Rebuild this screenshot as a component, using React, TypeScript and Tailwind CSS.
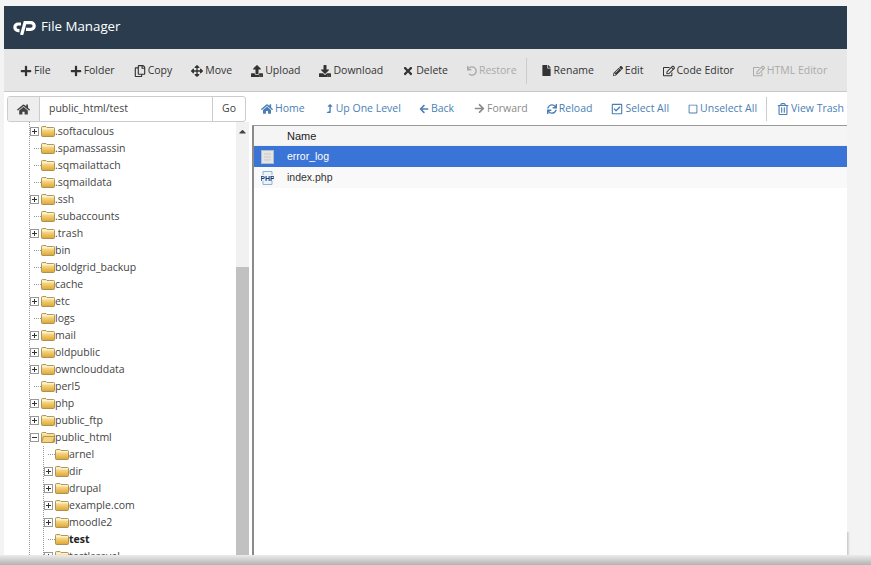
import React from "react";
import {
  FaPlus, FaRegCopy, FaArrowsAlt, FaUpload, FaDownload, FaTimes, FaUndo, FaFile, FaPencilAlt, FaRegEdit,
  FaHome, FaLevelUpAlt, FaArrowLeft, FaArrowRight, FaSync, FaRegCheckSquare, FaRegSquare, FaRegTrashAlt, FaCaretUp,
} from "react-icons/fa";

const Folder = ({ open }: { open?: boolean }) => (
  <svg width="14" height="11" viewBox="0 0 14 11" className="shrink-0">
    <defs>
      <linearGradient id="fg" x1="0" y1="0" x2="0" y2="1">
        <stop offset="0" stopColor="#fff2b8" />
        <stop offset="1" stopColor="#e0a52c" />
      </linearGradient>
    </defs>
    <path d="M.5 1.5Q.5 .5 1.5 .5H5l1 1h6.5q1 0 1 1V9.5q0 1-1 1h-11q-1 0-1-1z" fill="url(#fg)" stroke="#96814c" strokeWidth=".8" />
    {open ? <path d="M2.5 4.5H13.8L11.5 10.5H.6z" fill="#f6d27a" stroke="#96814c" strokeWidth=".7" /> : <path d="M1 2.8H13" stroke="#fff8dc" strokeWidth="1" />}
  </svg>
);

const Exp = ({ open }: { open?: boolean }) => (
  <svg width="9" height="9" viewBox="0 0 9 9" className="shrink-0 bg-white">
    <rect x=".5" y=".5" width="8" height="8" fill="#fff" stroke="#999" />
    <path d={open ? "M2 4.5H7" : "M2 4.5H7M4.5 2V7"} stroke="#333" />
  </svg>
);

type Node = { n: string; e?: boolean; o?: boolean; b?: boolean };

const Row = ({ node }: { node: Node }) => (
  <div className="h-[17px] flex items-center text-[10.5px] text-[#444]">
    <div className="w-[11px] h-[17px] flex items-center shrink-0 -ml-[4px]">
      {node.e || node.o ? <Exp open={node.o} /> : <span className="ml-[4px] w-[7px] border-t border-dotted border-[#999]" />}
    </div>
    <div className="w-[14px] shrink-0"><Folder open={node.o} /></div>
    <span className={node.b ? "font-bold text-[#222]" : ""}>{node.n}</span>
  </div>
);

const top: Node[] = [
  { n: ".softaculous", e: true }, { n: ".spamassassin" }, { n: ".sqmailattach" }, { n: ".sqmaildata" },
  { n: ".ssh", e: true }, { n: ".subaccounts" }, { n: ".trash", e: true }, { n: "bin" }, { n: "boldgrid_backup" },
  { n: "cache" }, { n: "etc", e: true }, { n: "logs" }, { n: "mail", e: true }, { n: "oldpublic", e: true },
  { n: "ownclouddata", e: true }, { n: "perl5" }, { n: "php", e: true },
  { n: "public_ftp", e: true }, { n: "public_html", o: true },
];
const sub: Node[] = [
  { n: "arnel" }, { n: "dir", e: true }, { n: "drupal", e: true }, { n: "example.com", e: true },
  { n: "moodle2", e: true }, { n: "test", b: true }, { n: "testlaravel", e: true },
];

const Tool = ({ icon, label, muted }: { icon: React.ReactNode; label: string; muted?: boolean }) => (
  <div className={`flex items-center gap-[2px] whitespace-nowrap ${muted ? "text-[#aaa]" : "text-[#333]"}`}>
    {icon}
    <span>{label}</span>
  </div>
);
const Nav = ({ icon, label, muted }: { icon: React.ReactNode; label: string; muted?: boolean }) => (
  <div className={`flex items-center gap-[2px] whitespace-nowrap ${muted ? "text-[#8a8a8a]" : "text-[#4a7fb5]"}`}>
    {icon}
    <span>{label}</span>
  </div>
);

const Logo = () => (
  <svg width="23" height="15" viewBox="0 0 23 15" className="shrink-0">
    <path d="M8 4H5.2A3.3 3.3 0 0 0 5.2 10.6H6.5" fill="none" stroke="#fff" strokeWidth="3.2" />
    <path d="M8.6 15L12 2.6H17.8A3.4 3.4 0 0 1 17.8 9.4H13" fill="none" stroke="#fff" strokeWidth="3.2" />
  </svg>
);

export default function App() {
  return (
    <div className="w-[871px] h-[565px] bg-[#f3f3f3] flex flex-col overflow-hidden pt-[6px]" style={{ fontFamily: "'Open Sans', sans-serif" }}>
      <div className="flex-1 min-h-0 flex">
        <div className="ml-[4px] w-[843px] bg-white flex flex-col min-h-0">
          <div className="h-[43px] shrink-0 bg-[#2a3c4d] flex items-center pl-[9px] gap-[5px] text-white text-[13.3px] pb-[1px]">
            <Logo />
            <span>File Manager</span>
          </div>
          <div className="h-[43px] shrink-0 bg-[#e6e6e6] border-b border-[#c8c8c8] flex items-center pl-[16px] pt-[1px] gap-[19px] text-[10.5px]">
            <Tool icon={<FaPlus className="text-[12px]" />} label="File" />
            <Tool icon={<FaPlus className="text-[12px]" />} label="Folder" />
            <Tool icon={<FaRegCopy className="text-[12px]" />} label="Copy" />
            <Tool icon={<FaArrowsAlt className="text-[12px]" />} label="Move" />
            <Tool icon={<FaUpload className="text-[12px]" />} label="Upload" />
            <Tool icon={<FaDownload className="text-[12px]" />} label="Download" />
            <Tool icon={<FaTimes className="text-[12px]" />} label="Delete" />
            <div className="flex items-center">
              <Tool icon={<FaUndo className="text-[10px]" />} label="Restore" muted />
              <div className="ml-[9px] h-[26px] border-l border-[#ccc]" />
            </div>
            <div className="-ml-[5px]"><Tool icon={<FaFile className="text-[11px]" />} label="Rename" /></div>
            <Tool icon={<FaPencilAlt className="text-[10px]" />} label="Edit" />
            <Tool icon={<FaRegEdit className="text-[12px]" />} label="Code Editor" />
            <Tool icon={<FaRegEdit className="text-[12px]" />} label="HTML Editor" muted />
          </div>
          <div className="flex-1 min-h-0 flex">
            <div className="w-[248px] shrink-0 flex flex-col min-h-0">
              <div className="h-[26px] mt-[4px] ml-[3px] w-[239px] shrink-0 flex border border-[#ccc] rounded-[3px] text-[10.5px] text-[#444] overflow-hidden">
                <div className="w-[32px] bg-[#eeeeee] flex items-center justify-center border-r border-[#ccc] text-[#444]"><FaHome className="text-[13px]" /></div>
                <div className="flex-1 flex items-center pl-[9px] border-r border-[#ccc]">public_html/test</div>
                <div className="w-[32px] flex items-center justify-center">Go</div>
              </div>
              <div className="flex-1 min-h-0 flex">
                <div className="flex-1 min-h-0 overflow-hidden">
                  <div className="ml-[25px] border-l border-dotted border-[#999] pl-[4px] pt-[1px]">
                    {top.map((t) => <Row key={t.n} node={t} />)}
                    <div className="ml-[9px] border-l border-dotted border-[#999] pl-[4px]">
                      {sub.map((t) => <Row key={t.n} node={t} />)}
                    </div>
                  </div>
                </div>
                <div className="w-[13px] mr-[3px] shrink-0 bg-[#f1f1f1] flex flex-col">
                  <div className="h-[16px] flex items-center justify-center text-[#444] text-[11px] mt-[1px]"><FaCaretUp /></div>
                  <div className="mt-[128px] flex-1 bg-[#c1c1c1]" />
                </div>
              </div>
            </div>
            <div className="flex-1 min-w-0 flex flex-col">
              <div className="h-[34px] shrink-0 flex items-center pl-[9px] gap-[19px] text-[10.5px] border-b border-[#999]">
                <Nav icon={<FaHome className="text-[12px]" />} label="Home" />
                <div className="ml-[1px] -mr-[2px]"><Nav icon={<FaLevelUpAlt className="text-[9px]" />} label="Up One Level" /></div>
                <div className="ml-[1px] -mr-[1px]"><Nav icon={<FaArrowLeft className="text-[10px]" />} label="Back" /></div>
                <div className="ml-[2px]"><Nav icon={<FaArrowRight className="text-[11px]" />} label="Forward" muted /></div>
                <Nav icon={<FaSync className="text-[10px]" />} label="Reload" />
                <Nav icon={<FaRegCheckSquare className="text-[12px]" />} label="Select All" />
                <Nav icon={<FaRegSquare className="text-[10px]" />} label="Unselect All" />
                <div className="h-[24px] border-l border-[#ccc] -ml-[10px] -mr-[9px]" />
                <Nav icon={<FaRegTrashAlt className="text-[12px]" />} label="View Trash" />
              </div>
              <div className="flex-1 min-h-0 border-l-2 border-[#8a8a8a] bg-white text-[10.5px]" style={{ fontFamily: "'Liberation Sans', sans-serif" }}>
                <div className="h-[20px] bg-[#f5f5f5] flex items-center pl-[33px] pt-[1px] text-[#222] text-[11px] border-b border-[#eee]">Name</div>
                <div className="h-[21px] bg-[#3a74d6] flex items-center text-white">
                  <div className="w-[33px] flex justify-center pr-[7px]">
                    <svg width="13" height="14" viewBox="0 0 13 14">
                      <rect x=".5" y=".5" width="12" height="13" fill="#e4e4e4" stroke="#b5bdc8" />
                      <path d="M3 4H10M3 7H10M3 10H10" stroke="#c9c9c9" />
                    </svg>
                  </div>
                  <span>error_log</span>
                </div>
                <div className="h-[21px] bg-[#f9f9f9] flex items-center text-[#333]">
                  <div className="w-[33px] flex justify-center pr-[7px]">
                    <svg width="13" height="14" viewBox="0 0 13 14">
                      <path d="M2 .5H11V13.5H2z" fill="#eef3fa" stroke="#8fb0d8" />
                      <rect x="0" y="4" width="13" height="6" fill="#eef3fa" />
                      <text x="6.5" y="9.8" textAnchor="middle" fontSize="7" fontWeight="700" fill="#173f78" style={{ fontFamily: "'Liberation Sans', sans-serif" }}>PHP</text>
                    </svg>
                  </div>
                  <span>index.php</span>
                </div>
              </div>
            </div>
          </div>
        </div>
        <div className="self-end w-[3px] h-[23px] bg-gradient-to-r from-[#c8c8c8] to-[#f3f3f3]" />
      </div>
      <div className="h-[10px] shrink-0 bg-gradient-to-b from-[#ececec] to-[#b3b3b3]" />
    </div>
  );
}
